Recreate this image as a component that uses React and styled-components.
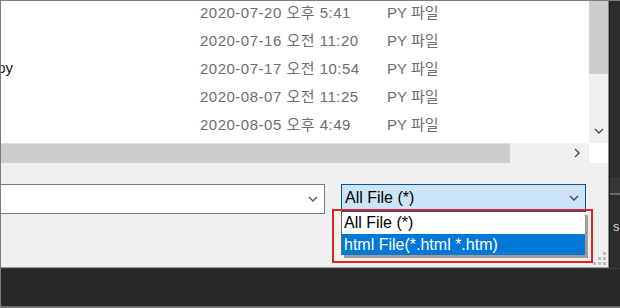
import React from "react";
import styled, { createGlobalStyle } from "styled-components";

const Global = createGlobalStyle`
    html, body {
        margin: 0;
        padding: 0;
        background: #2b2b2b;
    }
    * {
        box-sizing: border-box;
    }
`;

const Screen = styled.div`
    width: 620px;
    height: 308px;
    display: flex;
    flex-direction: column;
    overflow: hidden;
    background: #2a2a2a;
    border-left: 1px solid #7c7c7c;
    border-top: 1px solid #7c7c7c;
    border-bottom: 2px solid #6f6f6f;
    font-family: "Liberation Sans", "Noto Sans CJK KR", sans-serif;
`;

const TopRow = styled.div`
    display: flex;
    height: 267px;
`;

const Dialog = styled.div`
    width: 608px;
    display: flex;
    flex-direction: column;
    background: #f0f0f0;
    border-right: 1px solid #8a8a8a;
    border-bottom: 1px solid #9a9a9a;
`;

const ListArea = styled.div`
    display: flex;
    height: 142px;
`;

const FileList = styled.div`
    flex: 1;
    background: #fff;
    overflow: hidden;
`;

const ListBody = styled.div`
    margin-top: -4px;
`;

const Row = styled.div`
    display: flex;
    align-items: center;
    height: 28px;
    font-size: 15px;
    white-space: nowrap;
`;

const NameCell = styled.div`
    width: 199px;
    flex-shrink: 0;
    display: flex;
    justify-content: flex-end;
    overflow: hidden;
    padding-right: 187px;
    color: #1b1b1b;
`;

const DateCell = styled.div`
    width: 187px;
    flex-shrink: 0;
    color: #6d6d6d;
    letter-spacing: 0.5px;
`;

const TypeCell = styled.div`
    color: #6d6d6d;
`;

const VScroll = styled.div`
    width: 19px;
    display: flex;
    flex-direction: column;
    background: #f0f0f0;
`;

const VThumb = styled.div`
    height: 73px;
    background: #cdcdcd;
`;

const VTrack = styled.div`
    flex: 1;
    display: flex;
    align-items: flex-end;
    justify-content: center;
    padding-bottom: 8px;
`;

const HScrollRow = styled.div`
    display: flex;
    height: 20px;
`;

const HScroll = styled.div`
    flex: 1;
    display: flex;
    background: #f0f0f0;
`;

const HThumb = styled.div`
    width: 509px;
    background: #cdcdcd;
    border-top: 1px solid #dedede;
`;

const HTrack = styled.div`
    flex: 1;
    display: flex;
    align-items: center;
    justify-content: flex-end;
    padding-right: 8px;
`;

const Corner = styled.div`
    width: 19px;
    background: #fff;
`;

const BottomPanel = styled.div`
    position: relative;
    flex: 1;
    display: flex;
    align-items: flex-start;
    gap: 16px;
    padding-top: 21px;
`;

const NameInput = styled.div`
    width: 324px;
    height: 30px;
    display: flex;
    align-items: center;
    justify-content: flex-end;
    padding-right: 6px;
    background: #fff;
    border: 1px solid #7a7a7a;
    border-left: none;
`;

const ComboWrap = styled.div`
    position: relative;
    width: 245px;
`;

const Combo = styled.div`
    height: 28px;
    display: flex;
    align-items: center;
    justify-content: space-between;
    padding: 0 6px 0 3px;
    background: #cce4f7;
    border: 1px solid #005499;
    font-size: 16px;
    color: #000;
`;

const DropList = styled.div`
    position: absolute;
    top: 100%;
    left: 0;
    width: 244px;
    background: #fff;
    border-left: 1px solid #6a6a6a;
    box-shadow: 3px 3px 0 #a49a90;
    z-index: 2;
`;

const DropItem = styled.div`
    height: ${p => p.$h}px;
    display: flex;
    align-items: center;
    padding-left: 2px;
    font-size: 16px;
    background: ${p => (p.$selected ? "#0078d7" : "#fff")};
    color: ${p => (p.$selected ? "#fff" : "#000")};
`;

const Highlight = styled.div`
    position: absolute;
    left: 331px;
    top: 46px;
    width: 261px;
    height: 54px;
    border: 2px solid #e3232c;
    z-index: 3;
`;

const Grip = styled.svg`
    position: absolute;
    right: 1px;
    bottom: 1px;
`;

const RightStrip = styled.div`
    flex: 1;
    display: flex;
    flex-direction: column;
    background: #2c2c2c;
    border-left: 1px solid #1b1b1b;
`;

const StripBand = styled.div`
    height: ${p => p.$h}px;
    background: ${p => p.$bg};
`;

const StripText = styled.div`
    padding: 0 0 0 3px;
    font-size: 13px;
    line-height: 16px;
    color: #d8d8d8;
`;

const BottomStrip = styled.div`
    flex: 1;
    background: #282828;
    border-top: 1px solid #3a3a3a;
`;

const Chevron = ({ dir = "down", color = "#333" }) => {
    const d = dir === "down" ? "M1 1 L5 5 L9 1" : "M1 1 L5 5 L1 9";
    const w = dir === "down" ? 10 : 7;
    const h = dir === "down" ? 7 : 10;
    return (
        <svg width={w} height={h} viewBox={`0 0 ${w} ${h}`}>
            <path d={d} fill="none" stroke={color} strokeWidth="1.3" />
        </svg>
    );
};

const files = [
    { name: "", date: "2020-07-20 오후 5:41" },
    { name: "", date: "2020-07-16 오전 11:20" },
    { name: "naver_news_copy.py", date: "2020-07-17 오전 10:54" },
    { name: "", date: "2020-08-07 오전 11:25" },
    { name: "", date: "2020-08-05 오후 4:49" },
];

export default function App() {
    return (
        <Screen>
            <Global />
            <TopRow>
                <Dialog>
                    <ListArea>
                        <FileList>
                            <ListBody>
                                {files.map((f, i) => (
                                    <Row key={i}>
                                        <NameCell>{f.name}</NameCell>
                                        <DateCell>{f.date}</DateCell>
                                        <TypeCell>PY 파일</TypeCell>
                                    </Row>
                                ))}
                            </ListBody>
                        </FileList>
                        <VScroll>
                            <VThumb />
                            <VTrack>
                                <Chevron dir="down" color="#444" />
                            </VTrack>
                        </VScroll>
                    </ListArea>
                    <HScrollRow>
                        <HScroll>
                            <HThumb />
                            <HTrack>
                                <Chevron dir="right" color="#444" />
                            </HTrack>
                        </HScroll>
                        <Corner />
                    </HScrollRow>
                    <BottomPanel>
                        <NameInput>
                            <Chevron dir="down" color="#555" />
                        </NameInput>
                        <ComboWrap>
                            <Combo>
                                <span>All File (*)</span>
                                <Chevron dir="down" color="#444" />
                            </Combo>
                            <DropList>
                                <DropItem $h={22}>All File (*)</DropItem>
                                <DropItem $h={21} $selected>html File(*.html *.htm)</DropItem>
                            </DropList>
                        </ComboWrap>
                        <Highlight />
                        <Grip width="15" height="15" viewBox="0 0 15 15">
                            {[[10, 0], [5, 5], [10, 5], [0, 10], [5, 10], [10, 10]].map(([x, y], i) => (
                                <rect key={i} x={x + 1} y={y + 1} width="3" height="3" fill="#bcbcbc" />
                            ))}
                        </Grip>
                    </BottomPanel>
                </Dialog>
                <RightStrip>
                    <StripBand $h={176} $bg="#2c2c2c" />
                    <StripBand $h={16} $bg="#363636" />
                    <StripBand $h={2} $bg="#6a6a6a" />
                    <StripBand $h={24} $bg="#2c2c2c" />
                    <StripText>s</StripText>
                </RightStrip>
            </TopRow>
            <BottomStrip />
        </Screen>
    );
}
